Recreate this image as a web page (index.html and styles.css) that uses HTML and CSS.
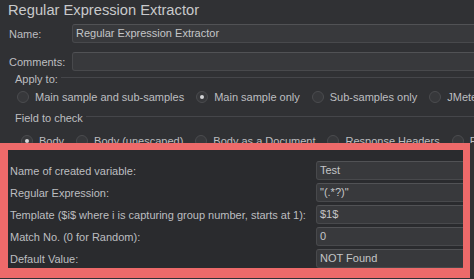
FILE: index.html
```html
<!DOCTYPE html>
<html lang="en">
<head>
  <meta charset="UTF-8">
  <meta name="viewport" content="width=device-width, initial-scale=1.0">
  <title>Regular Expression Extractor</title>
  <link rel="stylesheet" href="styles.css">
</head>
<body>
  <div class="panel">
    <h1 class="title">Regular Expression Extractor</h1>

    <div class="row name-row">
      <span class="label">Name:</span>
      <div class="field">Regular Expression Extractor</div>
    </div>
    <div class="row comments-row">
      <span class="label">Comments:</span>
      <div class="field"></div>
    </div>

    <div class="group">
      <div class="group-head">Apply to:</div>
      <div class="radios">
        <span class="radio"><i></i>Main sample and sub-samples</span>
        <span class="radio checked"><i></i>Main sample only</span>
        <span class="radio"><i></i>Sub-samples only</span>
        <span class="radio"><i></i>JMeter Variable Name to use</span>
      </div>
    </div>

    <div class="group cut">
      <div class="group-head check-head">Field to check</div>
      <div class="radios indent">
        <span class="radio checked"><i></i>Body</span>
        <span class="radio"><i></i>Body (unescaped)</span>
        <span class="radio"><i></i>Body as a Document</span>
        <span class="radio"><i></i>Response Headers</span>
        <span class="radio"><i></i>Request Headers</span>
      </div>
    </div>

    <section class="highlight">
      <div class="form">
        <span class="label">Name of created variable:</span>
        <div class="field">Test</div>
        <span class="label">Regular Expression:</span>
        <div class="field">"(.*?)"</div>
        <span class="label">Template ($i$ where i is capturing group number, starts at 1):</span>
        <div class="field">$1$</div>
        <span class="label">Match No. (0 for Random):</span>
        <div class="field">0</div>
        <span class="label">Default Value:</span>
        <div class="field">NOT Found</div>
      </div>
    </section>
  </div>
</body>
</html>
```

FILE: styles.css
```css
:root {
  --bg: #303134;
  --inner-bg: #2a2b2e;
  --field-bg: #38393c;
  --field-border: #48494c;
  --text: #bdbec0;
  --title: #c8c9cb;
  --red: #ee6a6a;
}

* {
  margin: 0;
  padding: 0;
  box-sizing: border-box;
}

body {
  background-color: var(--bg);
  color: var(--text);
  font-family: "Liberation Sans", Arial, sans-serif;
  font-size: 11px;
  overflow: hidden;
}

.panel {
  width: 474px;
  height: 279px;
  overflow: hidden;
}

.title {
  font-size: 14.7px;
  font-weight: normal;
  color: var(--title);
  line-height: 20px;
  padding-left: 8px;
  white-space: nowrap;
}

.row {
  display: flex;
  align-items: center;
  height: 19px;
  padding-left: 9px;
}

.row .label {
  width: 63px;
  flex: none;
}

.row .field {
  flex: none;
  width: 420px;
}

.name-row {
  margin-top: 4px;
}

.comments-row {
  margin-top: 9px;
}

.field {
  height: 19px;
  line-height: 17px;
  padding: 0 3px;
  background-color: var(--field-bg);
  border: 1px solid var(--field-border);
  border-top-color: #515255;
  border-radius: 3px;
  color: #c4c5c7;
  white-space: nowrap;
  overflow: hidden;
}

.group-head {
  display: flex;
  align-items: center;
  gap: 3px;
  height: 16px;
  padding-left: 15px;
  white-space: nowrap;
}

.group-head::after {
  content: "";
  flex: 1;
  height: 1px;
  margin-top: -3px;
  background-color: #45464a;
}

.check-head {
  margin-top: 3px;
}

.radios {
  display: flex;
  align-items: center;
  gap: 12px;
  height: 20px;
  padding-left: 17px;
  white-space: nowrap;
}

.radios.indent {
  margin-top: 5px;
  padding-left: 21px;
}

.radio {
  display: flex;
  align-items: center;
  gap: 6px;
}

.radio i {
  width: 12px;
  height: 12px;
  flex: none;
  border-radius: 50%;
  background-color: #37383b;
  border: 1px solid #4b4c4f;
  display: flex;
  align-items: center;
  justify-content: center;
}

.radio.checked i::after {
  content: "";
  width: 4px;
  height: 4px;
  border-radius: 50%;
  background-color: #d4d5d7;
}

.group.cut {
  height: 36px;
  overflow: hidden;
}

.highlight {
  width: 470px;
  border: solid var(--red);
  border-width: 7px 7px 10px 8px;
}

.form {
  display: grid;
  grid-template-columns: 306px 160px;
  grid-auto-rows: 19px;
  row-gap: 3px;
  align-items: center;
  height: 118px;
  padding: 11px 0 0 2px;
  background-color: var(--inner-bg);
  overflow: hidden;
  white-space: nowrap;
}
```
